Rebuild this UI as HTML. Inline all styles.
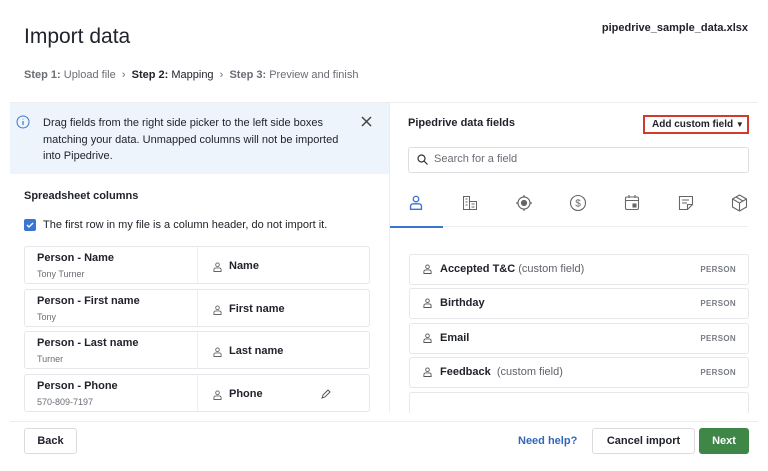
<!DOCTYPE html>
<html><head><meta charset="utf-8"><style>
*{box-sizing:border-box;margin:0;padding:0}
body{width:768px;height:471px;background:#fff;font-family:"Liberation Sans",sans-serif;color:#21232c;position:relative;overflow:hidden}
.a{position:absolute}
.row{position:absolute;left:24px;width:346px;height:38px;border:1px solid #e6e7ea;border-radius:3px;background:#fff}
.row .l1{position:absolute;left:12px;top:5px;font-size:11px;font-weight:bold}
.row .l2{position:absolute;left:12px;top:22px;font-size:9px;color:#6a6d75}
.row .m{position:absolute;left:172px;top:0;bottom:0;border-left:1px solid #eceef0}
.row .mt{position:absolute;left:188px;top:13px;font-size:11px;font-weight:bold}
.f{position:absolute;left:409px;width:340px;height:31px;border:1px solid #e6e7ea;border-radius:3px}
.f .t{position:absolute;left:30px;top:8px;font-size:11px;font-weight:bold}
.f .t span{font-weight:normal;color:#5f626a}
.f .p{position:absolute;right:12px;top:10px;font-size:8px;font-weight:bold;color:#7a7d85;letter-spacing:.3px}
.f svg{position:absolute;left:13px;top:9px}
.btn{position:absolute;top:428px;height:26px;border:1px solid #d9dbde;border-radius:3px;font-size:11px;font-weight:bold;text-align:center;line-height:25px;background:#fff}
</style></head><body>
<div class="a" style="left:24px;top:25px;font-size:21px;color:#21232c">Import data</div>
<div class="a" style="right:20px;top:22px;font-size:11px;font-weight:bold">pipedrive_sample_data.xlsx</div>
<div class="a" style="left:24px;top:69px;font-size:11px;color:#6a6d75"><b>Step 1:</b> Upload file &nbsp;&#8250;&nbsp; <b style="color:#21232c">Step 2:</b> <span style="color:#21232c">Mapping</span> &nbsp;&#8250;&nbsp; <b>Step 3:</b> Preview and finish</div>
<div class="a" style="left:10px;top:102px;width:748px;height:1px;background:#eceef0"></div>
<div class="a" style="left:389px;top:103px;width:1px;height:318px;background:#eceef0"></div>
<div class="a" style="left:10px;top:103px;width:379px;height:71px;background:#eef4fb"></div>
<svg class="a" style="left:16px;top:115px" width="14" height="14" viewBox="0 0 14 14"><circle cx="7" cy="7" r="6" fill="none" stroke="#3b78c9" stroke-width="1"/><path d="M7 6v4M7 3.8v.6" stroke="#3b78c9" stroke-width="1.2"/></svg>
<div class="a" style="left:43px;top:115px;width:310px;font-size:11px;line-height:16.5px;color:#21232c">Drag fields from the right side picker to the left side boxes matching your data. Unmapped columns will not be imported into Pipedrive.</div>
<svg class="a" style="left:361px;top:116px" width="11" height="11" viewBox="0 0 11 11"><path d="M1 1l9 9M10 1l-9 9" stroke="#444" stroke-width="1.5"/></svg>
<div class="a" style="left:24px;top:190px;font-size:11px;font-weight:bold">Spreadsheet columns</div>
<div class="a" style="left:24px;top:219px;width:12px;height:12px;background:#3a75d1;border-radius:2px"></div>
<svg class="a" style="left:24px;top:219px" width="12" height="12"><path d="M3 6l2 2 4-4" stroke="#fff" stroke-width="1.4" fill="none"/></svg>
<div class="a" style="left:43px;top:219px;font-size:11px">The first row in my file is a column header, do not import it.</div>
<svg width="0" height="0" style="position:absolute"><defs><symbol id="p" viewBox="0 0 10 11"><circle cx="5" cy="3" r="2" fill="none" stroke="currentColor" stroke-width="1"/><path d="M1 10.5V8.5q0-2 2-2h4q2 0 2 2v2z" fill="none" stroke="currentColor" stroke-width="1"/></symbol></defs></svg>
<div class="row" style="top:246px"><div class="l1">Person - Name</div><div class="l2">Tony Turner</div><div class="m"></div><svg class="a" style="left:188px;top:15px;color:#666" width="9" height="10"><use href="#p"/></svg><div class="mt" style="left:204px">Name</div></div>
<div class="row" style="top:289px"><div class="l1">Person - First name</div><div class="l2">Tony</div><div class="m"></div><svg class="a" style="left:188px;top:15px;color:#666" width="9" height="10"><use href="#p"/></svg><div class="mt" style="left:204px">First name</div></div>
<div class="row" style="top:331px"><div class="l1">Person - Last name</div><div class="l2">Turner</div><div class="m"></div><svg class="a" style="left:188px;top:15px;color:#666" width="9" height="10"><use href="#p"/></svg><div class="mt" style="left:204px">Last name</div></div>
<div class="row" style="top:374px"><div class="l1">Person - Phone</div><div class="l2">570-809-7197</div><div class="m"></div><svg class="a" style="left:188px;top:15px;color:#666" width="9" height="10"><use href="#p"/></svg><div class="mt" style="left:204px">Phone</div><svg class="a" style="left:296px;top:14px" width="10" height="10"><path d="M1 9l1-3 5-5 2 2-5 5z" fill="none" stroke="#555" stroke-width="1"/></svg></div>
<div class="a" style="left:408px;top:117px;font-size:11px;font-weight:bold">Pipedrive data fields</div>
<div class="a" style="left:643px;top:115px;width:106px;height:19px;border:2px solid #d23a2d;font-size:10px;font-weight:bold;line-height:15px;padding-left:7px">Add custom field <span style="font-size:8px">&#9660;</span></div>
<div class="a" style="left:408px;top:147px;width:341px;height:26px;border:1px solid #dcdee1;border-radius:3px"></div>
<svg class="a" style="left:417px;top:154px" width="11" height="11"><circle cx="4.5" cy="4.5" r="3.5" fill="none" stroke="#333" stroke-width="1.2"/><path d="M7 7l3.5 3.5" stroke="#333" stroke-width="1.2"/></svg>
<div class="a" style="left:434px;top:153px;font-size:11px;color:#6a6d75">Search for a field</div>
<svg class="a" style="left:409px;top:195px;color:#3a75d1" width="14" height="15"><use href="#p"/></svg>
<svg class="a" style="left:462px;top:195px" width="16" height="16" viewBox="0 0 16 16" fill="none" stroke="#666" stroke-width="1"><rect x="1.5" y="1.5" width="6" height="13"/><rect x="7.5" y="6.5" width="7" height="8"/><path d="M3.5 4h2M3.5 7h2M3.5 10h2M9.5 9h3M9.5 12h3"/></svg>
<svg class="a" style="left:515px;top:194px" width="18" height="18" viewBox="0 0 18 18" fill="none" stroke="#666" stroke-width="1.2"><circle cx="9" cy="9" r="6"/><circle cx="9" cy="9" r="2.5" fill="#666"/><path d="M9 1v2M9 15v2M1 9h2M15 9h2"/></svg>
<svg class="a" style="left:569px;top:194px" width="18" height="18" viewBox="0 0 18 18" fill="none" stroke="#666" stroke-width="1.1"><circle cx="9" cy="9" r="7.5"/><text x="9" y="12.5" font-size="10" text-anchor="middle" fill="#666" stroke="none" font-family="Liberation Sans">$</text></svg>
<svg class="a" style="left:624px;top:194px" width="16" height="17" viewBox="0 0 16 17" fill="none" stroke="#666" stroke-width="1.1"><rect x="1.5" y="3" width="13" height="12.5" rx="1.5"/><path d="M1.5 6.5h13M5 1v3M11 1v3"/><rect x="9" y="10" width="3" height="3" fill="#666"/></svg>
<svg class="a" style="left:678px;top:195px" width="16" height="16" viewBox="0 0 16 16" fill="none" stroke="#666" stroke-width="1.1"><path d="M1.5 1.5h13v8l-5 5h-8z M4 5h7M4 8h5M9.5 14.5v-5h5"/></svg>
<svg class="a" style="left:731px;top:194px" width="17" height="18" viewBox="0 0 17 18" fill="none" stroke="#666" stroke-width="1.1"><path d="M8.5 1l7 4v8l-7 4-7-4V5z M1.5 5l7 4 7-4M8.5 9v8M5 3l7 4"/></svg>
<div class="a" style="left:390px;top:226px;width:358px;height:1px;background:#eceef0"></div>
<div class="a" style="left:390px;top:226px;width:53px;height:2px;background:#3a75d1"></div>
<div class="f" style="top:254px"><svg width="9" height="10" style="color:#555"><use href="#p"/></svg><div class="t">Accepted T&amp;C <span>(custom field)</span></div><div class="p">PERSON</div></div>
<div class="f" style="top:288px"><svg width="9" height="10" style="color:#555"><use href="#p"/></svg><div class="t">Birthday</div><div class="p">PERSON</div></div>
<div class="f" style="top:323px"><svg width="9" height="10" style="color:#555"><use href="#p"/></svg><div class="t">Email</div><div class="p">PERSON</div></div>
<div class="f" style="top:357px"><svg width="9" height="10" style="color:#555"><use href="#p"/></svg><div class="t">Feedback &nbsp;<span>(custom field)</span></div><div class="p">PERSON</div></div>
<div class="f" style="top:392px;height:22px;border-bottom:none"></div>
<div class="a" style="left:10px;top:413px;width:748px;height:9px;background:#fff"></div>
<div class="a" style="left:10px;top:421px;width:748px;height:1px;background:#eceef0"></div>
<div class="btn" style="left:24px;width:53px">Back</div>
<div class="a" style="left:518px;top:435px;font-size:11px;font-weight:bold;color:#3168b8">Need help?</div>
<div class="btn" style="left:592px;width:103px">Cancel import</div>
<div class="btn" style="left:699px;width:50px;background:#3e8746;border-color:#3e8746;color:#fff">Next</div>
</body></html>
